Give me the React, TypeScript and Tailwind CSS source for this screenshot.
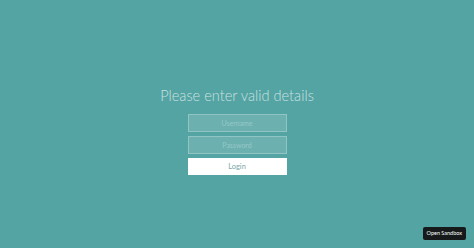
import React from 'react';

export default function App() {
  return (
    <div
      className="relative w-full h-[248px] bg-[#53a4a3] overflow-hidden"
      style={{ fontFamily: 'Lato, "Open Sans", sans-serif' }}
    >
      <div className="flex flex-col items-center pt-[86px]">
        <h1 className="text-[14.6px] leading-[20px] font-light text-white/70">
          Please enter valid details
        </h1>
        <form className="flex flex-col items-center gap-[4px] mt-[8px]" onSubmit={(e) => e.preventDefault()}>
          <input
            placeholder="Username"
            className="w-[99px] h-[18px] border border-white/25 bg-white/15 text-center text-[7px] text-white placeholder:text-white/30 outline-none"
          />
          <input
            type="password"
            placeholder="Password"
            className="w-[99px] h-[18px] border border-white/25 bg-white/15 text-center text-[7px] text-white placeholder:text-white/30 outline-none"
          />
          <button className="w-[99px] h-[17px] bg-white text-[7.5px] text-[#7aa8a7]">Login</button>
        </form>
      </div>
      <div className="absolute right-[8px] bottom-[8px] bg-[#161a1a] text-white text-[5.5px] px-[4px] h-[13px] flex items-center rounded-[2px]">
        Open Sandbox
      </div>
    </div>
  );
}
